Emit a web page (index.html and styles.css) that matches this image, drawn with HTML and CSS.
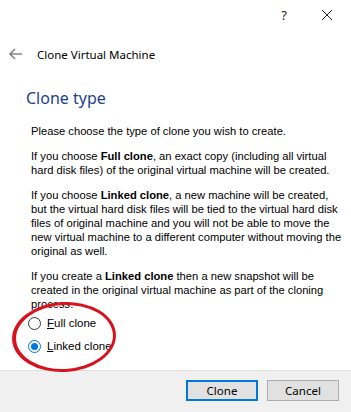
FILE: index.html
```html
<!DOCTYPE html>
<html lang="en">
<head>
    <meta charset="UTF-8">
    <title>Clone Virtual Machine</title>
    <link rel="stylesheet" href="styles.css">
</head>
<body>
    <div class="dialog">
        <div class="titlebar">
            <span class="help">?</span>
            <span class="close">
                <svg width="12" height="12" viewBox="0 0 12 12"><path d="M1 1L11 11M11 1L1 11" stroke="#222" stroke-width="1" fill="none"/></svg>
            </span>
        </div>
        <div class="nav">
            <svg class="back" width="14" height="12" viewBox="0 0 14 12"><path d="M1 6H13M6 1L1 6L6 11" stroke="#888" stroke-width="1.6" fill="none"/></svg>
            <span>Clone Virtual Machine</span>
        </div>
        <div class="content">
            <h1>Clone type</h1>
            <p>Please choose the type of clone you wish to create.</p>
            <p>If you choose <b>Full clone</b>, an exact copy (including all virtual<br>hard disk files) of the original virtual machine will be created.</p>
            <p>If you choose <b>Linked clone</b>, a new machine will be created,<br>but the virtual hard disk files will be tied to the virtual hard disk<br>files of original machine and you will not be able to move the<br>new virtual machine to a different computer without moving the<br>original as well.</p>
            <p class="last">If you create a <b>Linked clone</b> then a new snapshot will be<br>created in the original virtual machine as part of the cloning<br>process.</p>
            <div class="options">
                <div class="ring"></div>
                <label class="radio"><span class="dot"></span><span><u>F</u>ull clone</span></label>
                <label class="radio"><span class="dot on"></span><span><u>L</u>inked clone</span></label>
            </div>
        </div>
        <div class="footer">
            <div class="btn default">Clone</div>
            <div class="btn">Cancel</div>
        </div>
    </div>
</body>
</html>
```

FILE: styles.css
```css
*{
    margin: 0;
    padding: 0;
    box-sizing: border-box;
}
body{
    width: 351px;
    height: 412px;
    overflow: hidden;
    background-color: white;
    font-family: "Liberation Sans", Arial, sans-serif;
    color: #000;
}
.dialog{
    display: flex;
    flex-direction: column;
    height: 412px;
}
.titlebar{
    height: 30px;
    display: flex;
    justify-content: flex-end;
    align-items: center;
    padding-right: 18px;
    gap: 34px;
    font-family: "Noto Sans", sans-serif;
    font-size: 13px;
}
.help{
    color: #222;
}
.close{
    display: flex;
}
.nav{
    height: 48px;
    display: flex;
    align-items: center;
    padding-left: 9px;
    font-family: "Noto Sans", sans-serif;
    font-size: 11.5px;
}
.back{
    margin-right: 14px;
}
.content{
    flex: 1;
    padding-left: 31px;
    padding-right: 2px;
}
h1{
    font-family: "Noto Sans", sans-serif;
    font-weight: normal;
    font-size: 16px;
    color: #1d3f8f;
    margin-left: -5px;
    line-height: 22px;
    margin-top: 9px;
    margin-bottom: 15px;
}
p{
    font-size: 11.2px;
    line-height: 14px;
    margin-bottom: 11px;
    white-space: nowrap;
}
p.last{
    margin-bottom: 5px;
}
.options{
    position: relative;
    display: flex;
    flex-direction: column;
    gap: 9px;
    margin-left: -3px;
}
.radio{
    display: flex;
    align-items: center;
    gap: 6px;
    font-size: 11.5px;
    height: 14px;
}
.dot{
    width: 13px;
    height: 13px;
    border: 1px solid #333;
    border-radius: 50%;
    display: flex;
    align-items: center;
    justify-content: center;
}
.dot.on{
    border-color: #0078d7;
}
.dot.on::after{
    content: "";
    width: 7px;
    height: 7px;
    border-radius: 50%;
    background-color: #0078d7;
}
.ring{
    position: absolute;
    z-index: 1;
    left: -16px;
    top: -14px;
    width: 104px;
    height: 70px;
    border: 3px solid #d8121f;
    border-left-width: 4px;
    border-radius: 50%;
    transform: rotate(-3deg);
}
.footer{
    height: 42px;
    background-color: #f0f0f0;
    border-top: 1px solid #dfdfdf;
    display: flex;
    justify-content: flex-end;
    align-items: flex-start;
    padding-top: 9px;
    padding-right: 12px;
    gap: 9px;
}
.btn{
    width: 72px;
    height: 21px;
    background-color: #e1e1e1;
    border: 1px solid #adadad;
    font-family: "Noto Sans", sans-serif;
    font-size: 11.5px;
    display: flex;
    align-items: center;
    justify-content: center;
}
.btn.default{
    border: 2px solid #0078d7;
}
```
